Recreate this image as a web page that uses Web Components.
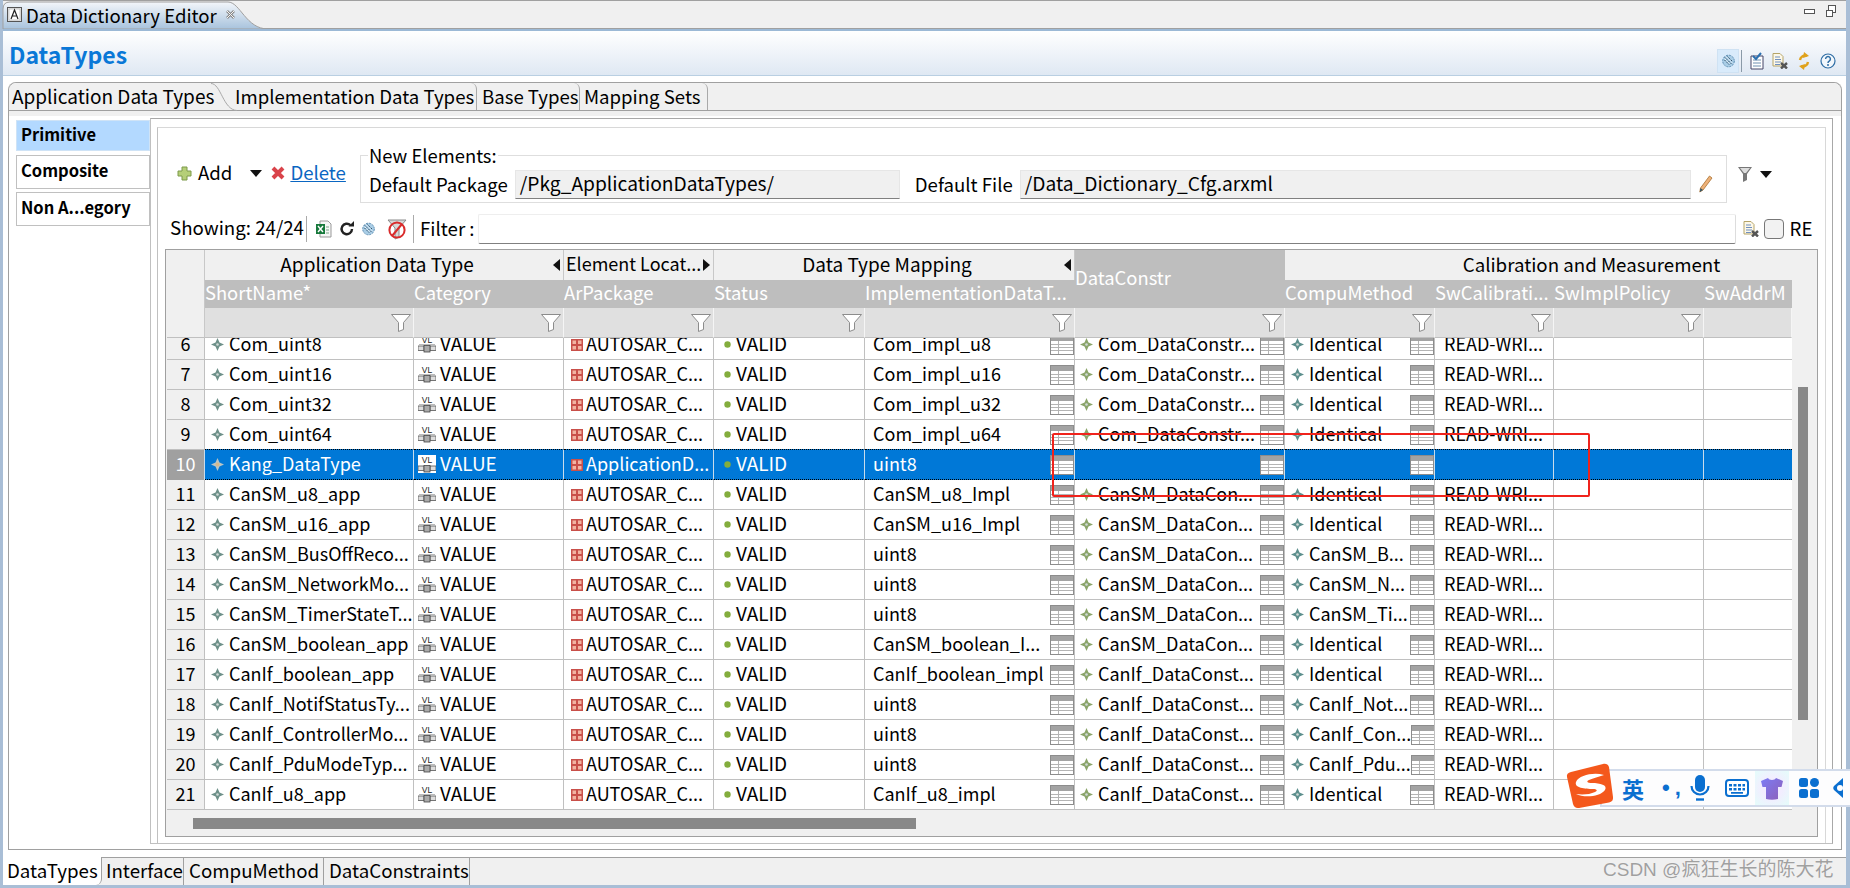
<!DOCTYPE html>
<html>
<head>
<meta charset="utf-8">
<title>Data Dictionary Editor</title>
<style>
    html, body { margin: 0; height: 100%; overflow: hidden; background: #fff; }
    body { font: 18px "Noto Sans CJK SC", "Noto Sans", sans-serif; color: #000; }
</style>
</head>
<body>
<dd-app></dd-app>

<script>
const ICONS = {
    tabA: `<svg width="15" height="15" viewBox="0 0 15 15"><rect x=".5" y=".5" width="14" height="14" fill="#e8e8e8" stroke="#555"/><rect x="2" y="2" width="11" height="11" fill="#fff" stroke="#aaa" stroke-width=".6"/><path d="M4 12 7.5 3 11 12M5.4 9h4.2" fill="none" stroke="#222" stroke-width="1.2"/></svg>`,
    close: `<svg width="11" height="11" viewBox="0 0 11 11"><path d="M2 2l7 7M9 2l-7 7" stroke="#8a8a8a" stroke-width="2.6"/><path d="M2 2l7 7M9 2l-7 7" stroke="#f4f4f4" stroke-width="1"/></svg>`,
    minimize: `<svg width="11" height="5" viewBox="0 0 11 5"><rect x=".5" y=".5" width="10" height="4" fill="#fff" stroke="#555"/></svg>`,
    restore: `<svg width="10" height="12" viewBox="0 0 10 12"><rect x="2.5" y=".5" width="7" height="7" fill="#fff" stroke="#555"/><rect x=".5" y="5.5" width="6" height="6" fill="#fff" stroke="#555"/></svg>`,
    plus: `<svg width="15" height="15" viewBox="0 0 15 15"><path d="M5 1h5v4h4v5h-4v4H5v-4H1V5h4z" fill="#b5cf78" stroke="#7d9a4a"/></svg>`,
    redx: `<svg width="14" height="14" viewBox="0 0 14 14"><path d="M2 2l10 10M12 2L2 12" stroke="#d9434a" stroke-width="4"/></svg>`,
    caret: `<svg width="12" height="7" viewBox="0 0 12 7"><path d="M0 0h12L6 7z" fill="#111"/></svg>`,
    excel: `<svg width="17" height="18" viewBox="0 0 17 18"><path d="M5 1h8l3 3v13H5z" fill="#f6f6f6" stroke="#999"/><rect x="1" y="4" width="9" height="10" fill="#17793c"/><path d="M3 6l5 6M8 6l-5 6" stroke="#fff" stroke-width="1.4"/><path d="M11 7h3M11 10h3M11 13h3" stroke="#7aa888"/></svg>`,
    refresh: `<svg width="16" height="16" viewBox="0 0 16 16"><path d="M13 8a5.2 5.2 0 1 1-1.6-3.8" fill="none" stroke="#222" stroke-width="2.4"/><path d="M9.5 5.5H15V0z" fill="#222"/></svg>`,
    gear: `<svg width="13" height="14" viewBox="0 0 13 14"><circle cx="6.5" cy="7" r="5.8" fill="#a9cde6" stroke="#5b8db2" stroke-dasharray="2 1"/><path d="M3 3.500l7 7M5.500 2.500l5 5M2.500 6l5 5" stroke="#2f4f66" stroke-width="1" stroke-dasharray="1.500 1"/><path d="M4.200 2.800l6 6M2.800 4.800l5 5" stroke="#fff" stroke-width=".9" stroke-dasharray="1.500 1"/></svg>`,
    nofilter: `<svg width="20" height="22" viewBox="0 0 20 22"><path d="M1 2h18l-7 8v9l-4 2V10z" fill="#d8d8d8" stroke="#8a8a8a"/><circle cx="10" cy="12" r="7.6" fill="none" stroke="#d92b2b" stroke-width="2"/><path d="M5 18 15 6" stroke="#d92b2b" stroke-width="2"/></svg>`,
    funnel: `<svg width="14" height="15" viewBox="0 0 14 15"><path d="M0 0h14L9 7v6l-4 2V7z" fill="#777"/><path d="M2 1h10L8 6H6z" fill="#ddd"/></svg>`,
    pencil: `<svg width="14" height="18" viewBox="0 0 14 18"><path d="M10.5 1 13 3 4 15 .8 17 1.5 13z" fill="#eeb27a" stroke="#a9702f" stroke-width=".8"/><path d="M.8 17 1.5 13 4 15z" fill="#356"/></svg>`,
    doccheck: `<svg width="14" height="18" viewBox="0 0 14 18"><path d="M1 4h12v13H1z" fill="#fff" stroke="#446"/><path d="M3 8h8M3 11h8M3 14h8" stroke="#6f8fb0"/><path d="M3 4l3 3 5-6" fill="none" stroke="#2a6fb0" stroke-width="2"/></svg>`,
    docx: `<svg width="16" height="16" viewBox="0 0 16 16"><path d="M1 .5h7l3 3V13H1z" fill="#fdf8e8" stroke="#b5a468"/><path d="M3 4h5M3 6.5h6M3 9h6M3 11.5h5" stroke="#6f8fc0"/><path d="M9 10l6 5.5M15 10l-6 5.5" stroke="#555" stroke-width="2.4"/></svg>`,
    sync: `<svg width="16" height="18" viewBox="0 0 16 18"><path d="M4 8a5 5 0 0 1 7-4" fill="none" stroke="#e0a21c" stroke-width="2.4"/><path d="M8 0l5 4-6 2z" fill="#e0a21c"/><path d="M12 10a5 5 0 0 1-7 4" fill="none" stroke="#e0a21c" stroke-width="2.4"/><path d="M8 18l-5-4 6-2z" fill="#e0a21c"/></svg>`,
    help: `<svg width="16" height="16" viewBox="0 0 16 16"><circle cx="8" cy="8" r="7" fill="#f2f7fc" stroke="#2f6ea5" stroke-width="1.2"/><path d="M5.6 6a2.4 2.4 0 1 1 3.6 2.1C8.4 8.600 8 9 8 10" fill="none" stroke="#2f6ea5" stroke-width="1.5"/><circle cx="8" cy="12" r="1" fill="#2f6ea5"/></svg>`,
    headFunnel: `<svg width="20" height="18" viewBox="0 0 20 18"><path d="M.5.5h19l-7 8v7l-5 2v-9z" fill="#fff" stroke="#8c8c8c"/></svg>`,
    triLeft: `<svg width="7" height="12" viewBox="0 0 7 12"><path d="M7 0v12L0 6z" fill="#111"/></svg>`,
    triRight: `<svg width="7" height="12" viewBox="0 0 7 12"><path d="M0 0v12l7-6z" fill="#111"/></svg>`,
    star: `<svg width="13" height="13" viewBox="0 0 13 13"><path d="M6.500 0l2 4.500 4.500 2-4.500 2-2 4.500-2-4.500-4.500-2 4.500-2z" fill="currentColor"/><circle cx="6.500" cy="6.500" r="1.300" fill="#cfdad6"/></svg>`,
    starSel: `<svg width="13" height="13" viewBox="0 0 13 13"><path d="M6.500 0l2 4.500 4.500 2-4.500 2-2 4.500-2-4.500-4.500-2 4.500-2z" fill="#b9c4c4"/><circle cx="6.500" cy="6.500" r="2" fill="#d7b98a"/></svg>`,
    value: `<svg width="18" height="20" viewBox="0 0 18 20"><text x="9" y="8" font-size="8.500" text-anchor="middle" font-family="Liberation Sans" fill="#222">VL</text><path d="M1 9.500h16" stroke="#bbb"/><rect x="0" y="11" width="6" height="4.500" fill="#ddd" stroke="#555" stroke-width=".8"/><rect x="12" y="11" width="6" height="4.500" fill="#ddd" stroke="#555" stroke-width=".8"/><rect x="6" y="10.500" width="6" height="6.500" fill="#aaa" stroke="#444" stroke-width=".8"/></svg>`,
    valueSel: `<svg width="18" height="20" viewBox="0 0 18 20"><rect width="18" height="18" fill="#fff"/><text x="9" y="8" font-size="8.500" text-anchor="middle" font-family="Liberation Sans" fill="#222">VL</text><rect x="0" y="11" width="6" height="4.500" fill="#ddd" stroke="#555" stroke-width=".8"/><rect x="12" y="11" width="6" height="4.500" fill="#ddd" stroke="#555" stroke-width=".8"/><rect x="6" y="10.500" width="6" height="6.500" fill="#aaa" stroke="#444" stroke-width=".8"/></svg>`,
    pkg: `<svg width="12" height="12" viewBox="0 0 12 12"><rect width="12" height="12" fill="#c9504a"/><path d="M1.500 1.500h3.500V5H1.500zM7 1.500h3.500V5H7zM1.500 7h3.500v3.500H1.500zM7 7h3.500v3.500H7z" fill="#f2b3a2"/></svg>`,
    dot: `<svg width="7" height="7" viewBox="0 0 7 7"><circle cx="3.500" cy="3.500" r="3.200" fill="#83ad3d"/></svg>`,
    table: `<svg width="24" height="20" viewBox="0 0 24 20"><rect x=".5" y=".5" width="23" height="19" fill="#fff" stroke="#8c8c8c"/><rect x="1" y="1" width="22" height="5" fill="#a3a3a3"/><path d="M1 9.500h22M1 12.500h22M1 15.500h22M8.500 6v13" stroke="#b4b4b4"/></svg>`,
    sogou: `<svg width="48" height="46" viewBox="0 0 48 46"><path d="M5 9 37 1c3-.7 5 .5 6 3l4 30c.4 3-1 5-4 5.500L13 45c-3 .5-5-1-6-4L1 14c-.6-2.500 1-4.300 4-5z" fill="#f4581c"/><path d="M38 12C28 9 13 12 10 19c-2 6 9 7 17 7 4 .2 5 1.500 2 3-5 2.500-13 3-19 2 8 4 24 3 29-4 3-5-5-7-13-7-5 0-6-1.500-3-3 4-2 10-3 15-5z" fill="#fff"/></svg>`,
    mic: `<svg width="20" height="26" viewBox="0 0 20 26"><rect x="5" y="0" width="10" height="17" rx="5" fill="#0a6fd0"/><path d="M1.500 11a8.500 8.500 0 0 0 17 0" fill="none" stroke="#0a6fd0" stroke-width="2.200"/><path d="M6 24.500h8" stroke="#0a6fd0" stroke-width="2.400"/></svg>`,
    keyboard: `<svg width="24" height="18" viewBox="0 0 24 18"><rect x="1" y="1" width="22" height="16" rx="3" fill="#fff" stroke="#0a6fd0" stroke-width="2"/><path d="M4 5h3v2.500H4zM8.500 5h3v2.500h-3zM13 5h3v2.500h-3zM17.500 5H20v2.500h-2.500zM4 9h3v2.500H4zM8.500 9h3v2.500h-3zM13 9h3v2.500h-3zM17.500 9H20v2.500h-2.500zM6 13h12v1.800H6z" fill="#0a6fd0"/></svg>`,
    shirt: `<svg width="24" height="22" viewBox="0 0 24 22"><defs><linearGradient id="sg" x1="0" y1="0" x2="1" y2="1"><stop offset="0" stop-color="#7c7bf5"/><stop offset="1" stop-color="#8d60b8"/></linearGradient></defs><path d="M1 3 8 0c1 2.500 7 2.500 8 0l7 3-1.500 6H18v12c-4 1-8 1-12 0V9H2.500z" fill="url(#sg)"/></svg>`,
    apps: `<svg width="20" height="20" viewBox="0 0 20 20"><rect x="0" y="0" width="9" height="9" rx="2.500" fill="#0a6fd0"/><circle cx="15.500" cy="4.500" r="4.500" fill="#0a6fd0"/><rect x="0" y="11" width="9" height="9" rx="2.500" fill="#0a6fd0"/><rect x="11" y="11" width="9" height="9" rx="2.500" fill="#0a6fd0"/></svg>`,
    skin: `<svg width="10" height="20" viewBox="0 0 10 20"><path d="M10 0 1 8c-1 1-1 3 0 4l9 8z" fill="#0a6fd0"/><circle cx="7" cy="10" r="3" fill="#fff"/></svg>`,
}

class DdIcon extends HTMLElement {
    constructor() {
        super()
        this.attachShadow({ mode: 'open' })
    }
    connectedCallback() {
        const tint = this.getAttribute('tint')
        this.shadowRoot.innerHTML = `
            <style>:host { display: inline-flex; flex: none; ${tint ? 'color:' + tint + ';' : ''} } svg { display: block; }</style>
            ${ICONS[this.getAttribute('name')] || ''}`
    }
}

// ---- top of the editor
var templateEditorTabs = document.createElement('template')
templateEditorTabs.innerHTML = `
<style>
    :host { display: flex; height: 29px; background: #f0f0f0; border-top: 1px solid #a0a0a0; border-bottom: 1px solid #a0a0a0; box-sizing: border-box; }
    #tab { position: relative; width: 265px; display: flex; align-items: center; gap: 4px; padding-left: 4px; box-sizing: border-box; font-size: 18.600px; }
    #tab svg.shape { position: absolute; left: -3px; top: 0; z-index: 0; }
    #tab > dd-icon, #tab > span { position: relative; z-index: 1; }
    #close { margin-left: 4px; }
    #buttons { margin-left: auto; display: flex; gap: 11px; align-items: center; height: 20px; padding-right: 10px; }
</style>
<div id="tab">
    <svg class="shape" width="268" height="28" viewBox="0 0 268 28">
        <defs><linearGradient id="g" x1="0" y1="0" x2="0" y2="1"><stop offset="0" stop-color="#f3f6fa"/><stop offset="1" stop-color="#a8c3dd"/></linearGradient></defs>
        <path d="M3 28V8Q3 1 10 1H228C240 1 246 28 268 28Z" fill="url(#g)" stroke="#a0a0a0"/>
    </svg>
    <dd-icon name="tabA"></dd-icon>
    <span>Data Dictionary Editor</span>
    <dd-icon id="close" name="close"></dd-icon>
</div>
<div id="buttons"><dd-icon name="minimize"></dd-icon><dd-icon name="restore"></dd-icon></div>
`
class DdEditorTabs extends HTMLElement {
    constructor() {
        super()
        this.attachShadow({ mode: 'open' }).appendChild(templateEditorTabs.content.cloneNode(true))
    }
}

var templateFormHeader = document.createElement('template')
templateFormHeader.innerHTML = `
<style>
    :host { display: flex; align-items: flex-start; height: 47px; box-sizing: border-box; padding: 6px 10px 0 6px; border-top: 2px solid #9cb9d6; border-bottom: 1px solid #b9cfe2; background: linear-gradient(#fff, #dfe8f3); }
    h1 { margin: 0; font-size: 23px; line-height: 34px; font-weight: 700; color: #0a78d7; }
    #tools { margin-left: auto; display: flex; align-items: center; gap: 8px; height: 24px; margin-top: 12px; }
    #sel { width: 22px; height: 24px; display: flex; align-items: center; justify-content: center; background: #d9ebfb; border: 1px solid #cfe2f3; box-sizing: border-box; }
    #sep { width: 1px; height: 22px; background: #8a9aa8; margin-left: -6px; }
</style>
<h1>DataTypes</h1>
<div id="tools">
    <div id="sel"><dd-icon name="gear"></dd-icon></div>
    <div id="sep"></div>
    <dd-icon name="doccheck"></dd-icon>
    <dd-icon name="docx"></dd-icon>
    <dd-icon name="sync"></dd-icon>
    <dd-icon name="help"></dd-icon>
</div>
`
class DdFormHeader extends HTMLElement {
    constructor() {
        super()
        this.attachShadow({ mode: 'open' }).appendChild(templateFormHeader.content.cloneNode(true))
    }
}

// ---- inner and bottom tab strips
var templateInnerTabs = document.createElement('template')
templateInnerTabs.innerHTML = `
<style>
    :host { display: flex; height: 28px; box-sizing: border-box; border-bottom: 1px solid #a0a0a0; background: #f0f0f0; border-radius: 8px 8px 0 0; }
    .t { display: flex; align-items: center; font-size: 18.600px; padding: 0 0 3px 4px; border-right: 1px solid #a9a9a9; border-radius: 0 6px 0 0; box-sizing: border-box; white-space: nowrap; }
    #active { position: relative; width: 226px; padding: 0 0 4px 3px; border: 0; margin-bottom: -1px; font-size: 19px; }
    #active svg { position: absolute; right: -2px; top: 0; }
</style>
<div class="t" id="active">Application Data Types
    <svg width="26" height="28" viewBox="0 0 26 28"><path d="M0 .5C10 .5 12 27 26 27.500" fill="none" stroke="#a9a9a9"/></svg>
</div>
<div class="t" style="width:242px;padding-left:0">Implementation Data Types</div>
<div class="t" style="width:103px;padding-left:5px">Base Types</div>
<div class="t" style="width:128px;padding-left:4px">Mapping Sets</div>
`
class DdInnerTabs extends HTMLElement {
    constructor() {
        super()
        this.attachShadow({ mode: 'open' }).appendChild(templateInnerTabs.content.cloneNode(true))
    }
}

var templateBottomTabs = document.createElement('template')
templateBottomTabs.innerHTML = `
<style>
    :host { display: flex; height: 28px; margin-top: 7px; background: #f0f0f0; border-top: 1px solid #a0a0a0; box-sizing: border-box; font-size: 18.700px; }
    div { display: flex; align-items: center; padding: 0 0 4px 5px; border-right: 1px solid #a0a0a0; box-sizing: border-box; white-space: nowrap; }
    #active { width: 99px; background: #fff; margin-top: -1px; border-right: 1px solid #a0a0a0; border-radius: 0 0 6px 0; padding-left: 4px; }
</style>
<div id="active">DataTypes</div>
<div style="width:82px;padding-left:4px">Interface</div>
<div style="width:140px">CompuMethod</div>
<div style="width:146px">DataConstraints</div>
`
class DdBottomTabs extends HTMLElement {
    constructor() {
        super()
        this.attachShadow({ mode: 'open' }).appendChild(templateBottomTabs.content.cloneNode(true))
    }
}

var templateSideList = document.createElement('template')
templateSideList.innerHTML = `
<style>
    :host { display: flex; flex-direction: column; width: 134px; flex: none; gap: 3px; padding: 2px 0 0 7px; font-size: 16.500px; font-weight: 700; }
    div { display: flex; align-items: center; box-sizing: border-box; height: 34px; padding: 0 0 4px 4px; border: 1px solid #c0c0c0; }
    #first { height: 31px; background: #b3d9ff; border-color: #cfe3f6; margin-bottom: 1px; padding-bottom: 3px; }
</style>
<div id="first">Primitive</div>
<div>Composite</div>
<div>Non A...egory</div>
`
class DdSideList extends HTMLElement {
    constructor() {
        super()
        this.attachShadow({ mode: 'open' }).appendChild(templateSideList.content.cloneNode(true))
    }
}

// ---- toolbar rows above the table
var templateElementsBar = document.createElement('template')
templateElementsBar.innerHTML = `
<style>
    :host { display: flex; align-items: flex-start; height: 76px; font-size: 18.600px; box-sizing: border-box; padding: 17px 0 0 19px; }
    #add { display: flex; align-items: center; width: 183px; height: 24px; margin-top: 16px; }
    #add dd-icon:nth-child(1) { margin-right: 6px; }
    #add span, #add a { margin-bottom: 3px; }
    #caret { margin: 0 9px 0 18px; }
    a { color: #0a66c2; text-decoration: underline; margin-left: 5px; }
    fieldset { margin: 0; padding: 0 8px; width: 1367px; height: 58px; box-sizing: border-box; border: 1px solid #dedede; min-inline-size: 0; }
    legend { padding: 0 1px; font-size: 18.400px; line-height: 20px; height: 20px; margin-left: -1px; }
    #fields { display: flex; align-items: center; height: 30px; margin-top: 4px; }
    .val { height: 29px; box-sizing: border-box; display: flex; align-items: center; background: #f0f0f0; border: 1px solid #e6e6e6; border-bottom: 1px solid #808080; padding: 0 0 2px 4px; font-size: 19.200px; }
    #fields > span { margin-bottom: 2px; }
    #pkg { width: 385px; margin: 0 15px 0 7px; }
    #file { width: 671px; margin-left: 7px; }
    #pencil { margin-left: 8px; }
    #flt { display: flex; align-items: center; gap: 8px; margin: 22px 0 0 11px; }
</style>
<div id="add">
    <dd-icon name="plus"></dd-icon><span>Add</span>
    <dd-icon id="caret" name="caret"></dd-icon>
    <dd-icon name="redx"></dd-icon><a>Delete</a>
</div>
<fieldset>
    <legend>New Elements:</legend>
    <div id="fields">
        <span>Default Package</span><div class="val" id="pkg">/Pkg_ApplicationDataTypes/</div>
        <span>Default File</span><div class="val" id="file">/Data_Dictionary_Cfg.arxml</div>
        <dd-icon id="pencil" name="pencil"></dd-icon>
    </div>
</fieldset>
<div id="flt"><dd-icon name="funnel"></dd-icon><dd-icon name="caret"></dd-icon></div>
`
class DdElementsBar extends HTMLElement {
    constructor() {
        super()
        this.attachShadow({ mode: 'open' }).appendChild(templateElementsBar.content.cloneNode(true))
    }
}

var templateFilterBar = document.createElement('template')
templateFilterBar.innerHTML = `
<style>
    :host { display: flex; align-items: center; height: 30px; margin-top: 10px; font-size: 18.700px; padding-left: 12px; }
    #showing { width: 137px; overflow: hidden; white-space: nowrap; height: 26px; line-height: 22px; border-right: 1px solid #aaa; margin-right: 8px; flex: none; box-sizing: border-box; }
    span { margin-bottom: 3px; }
    #excel { margin-right: 7px; }
    #refresh { margin-right: 7px; }
    #gear { margin-right: 12px; }
    #sep { width: 1px; height: 28px; background: #aaa; margin: 0 6px 0 6px; }
    input { width: 1258px; height: 30px; box-sizing: border-box; border: 1px solid #eee; border-bottom-color: #808080; border-right-color: #ddd; border-radius: 2px; margin: 0 7px 0 3px; flex: none; background: #fff; }
    #chk { width: 20px; height: 20px; box-sizing: border-box; border: 1px solid #777; border-radius: 4px; background: #f2f2f2; margin: 0 6px 0 0; }
</style>
<div id="showing">Showing: 24/24</div>
<dd-icon id="excel" name="excel"></dd-icon>
<dd-icon id="refresh" name="refresh"></dd-icon>
<dd-icon id="gear" name="gear"></dd-icon>
<dd-icon name="nofilter"></dd-icon>
<div id="sep"></div>
<span>Filter :</span>
<input type="text">
<dd-icon name="docx" style="margin:0 5px 0 0"></dd-icon>
<div id="chk"></div>
<span>RE</span>
`
class DdFilterBar extends HTMLElement {
    constructor() {
        super()
        this.attachShadow({ mode: 'open' }).appendChild(templateFilterBar.content.cloneNode(true))
    }
}

// ---- the table
const COLS = '38px 209px 150px 150px 151px 210px 210px 150px 119px 150px 88px'
const A = 'AUTOSAR_C...'
const ROWS = [
    [6, 'Com_uint8', A, 'Com_impl_u8', 'Com_DataConstr...', 'Identical'],
    [7, 'Com_uint16', A, 'Com_impl_u16', 'Com_DataConstr...', 'Identical'],
    [8, 'Com_uint32', A, 'Com_impl_u32', 'Com_DataConstr...', 'Identical'],
    [9, 'Com_uint64', A, 'Com_impl_u64', 'Com_DataConstr...', 'Identical'],
    [10, 'Kang_DataType', 'ApplicationD...', 'uint8', '', ''],
    [11, 'CanSM_u8_app', A, 'CanSM_u8_Impl', 'CanSM_DataCon...', 'Identical'],
    [12, 'CanSM_u16_app', A, 'CanSM_u16_Impl', 'CanSM_DataCon...', 'Identical'],
    [13, 'CanSM_BusOffReco...', A, 'uint8', 'CanSM_DataCon...', 'CanSM_B...'],
    [14, 'CanSM_NetworkMo...', A, 'uint8', 'CanSM_DataCon...', 'CanSM_N...'],
    [15, 'CanSM_TimerStateT...', A, 'uint8', 'CanSM_DataCon...', 'CanSM_Ti...'],
    [16, 'CanSM_boolean_app', A, 'CanSM_boolean_I...', 'CanSM_DataCon...', 'Identical'],
    [17, 'CanIf_boolean_app', A, 'CanIf_boolean_impl', 'CanIf_DataConst...', 'Identical'],
    [18, 'CanIf_NotifStatusTy...', A, 'uint8', 'CanIf_DataConst...', 'CanIf_Not...'],
    [19, 'CanIf_ControllerMo...', A, 'uint8', 'CanIf_DataConst...', 'CanIf_Con...'],
    [20, 'CanIf_PduModeTyp...', A, 'uint8', 'CanIf_DataConst...', 'CanIf_Pdu...'],
    [21, 'CanIf_u8_app', A, 'CanIf_u8_impl', 'CanIf_DataConst...', 'Identical'],
]

var templateGrid = document.createElement('template')
templateGrid.innerHTML = `
<style>
    :host { display: flex; height: 588px; box-sizing: border-box; margin: 5px 7px 0 7px; border: 1px solid #a0a0a0; background: #f0f0f0; font-size: 18px; }
    #main { width: 1625px; margin-left: 1px; flex: none; }
    #head { display: grid; grid-template-columns: ${COLS}; grid-template-rows: 30px 28px 30px; }
    #head > div { display: flex; align-items: center; white-space: nowrap; overflow: hidden; box-sizing: border-box; }
    .corner { grid-column: 1; grid-row: 1 / 4; background: #f0f0f0; border-right: 1px solid #c8c8c8; border-bottom: 1px solid #c0c0c0; }
    .grp { grid-row: 1; background: #f0f0f0; justify-content: center; position: relative; border-right: 1px solid #c8c8c8; padding: 0 14px 4px 0; font-size: 19px; }
    .grp dd-icon { position: absolute; right: 3px; top: 9px; }
    .name { grid-row: 2; background: #bebebe; color: #fff; padding-bottom: 4px; font-size: 18.400px; }
    .flt { grid-row: 3; background: #e0e0e0; border-right: 1px solid #f5f5f5; border-bottom: 1px solid #c0c0c0; justify-content: flex-end; padding-right: 2px; }
    #dc { grid-column: 7; grid-row: 1 / 3; background: #bebebe; color: #fff; padding-bottom: 4px; font-size: 18.400px; }
    #body { height: 472px; overflow: hidden; background: #fff; }
    #rows { margin-top: -8px; }
    .row { display: grid; grid-template-columns: ${COLS}; height: 30px; }
    .c { display: flex; align-items: center; box-sizing: border-box; height: 30px; border-right: 1px solid #c0c0c0; border-bottom: 1px solid #c0c0c0; white-space: nowrap; overflow: hidden; background: #fff; }
    .c span { margin-bottom: 4px; }
    .c .big { font-size: 19px; }
    .c.no { background: #f0f0f0; justify-content: center; }
    .c .t { margin-left: auto; }
    .sel .c { background: #0078d7; color: #fff; border-right-color: #c8dcec; border-top: 1px dotted #000; border-bottom: 1px dotted #000; height: 31px; margin-top: -1px; }
    .sel .c.no { background: #a0a0a0; border-top: 0; border-bottom: 0; height: 30px; margin-top: 0; }
    #hbar { height: 27px; display: flex; align-items: center; }
    #hbar div { width: 723px; height: 11px; background: #888; margin-left: 26px; }
    #side { flex: 1; position: relative; }
    #vthumb { width: 10px; height: 333px; background: #888; margin: 137px 0 0 6px; }
</style>
<div id="main">
    <div id="head"></div>
    <div id="body"><div id="rows"></div></div>
    <div id="hbar"><div></div></div>
</div>
<div id="side"><div id="vthumb"></div></div>
`
class DdGrid extends HTMLElement {
    constructor() {
        super()
        this.attachShadow({ mode: 'open' }).appendChild(templateGrid.content.cloneNode(true))
    }

    connectedCallback() {
        const names = ['ShortName*', 'Category', 'ArPackage', 'Status', 'ImplementationDataT...', null, 'CompuMethod', 'SwCalibrati...', 'SwImplPolicy', 'SwAddrM']
        let head = `
            <div class="corner"></div>
            <div class="grp" style="grid-column:2 / 4">Application Data Type<dd-icon name="triLeft"></dd-icon></div>
            <div class="grp" style="grid-column:4;justify-content:flex-start;padding-left:2px;font-size:18px">Element Locat...<dd-icon name="triRight"></dd-icon></div>
            <div class="grp" style="grid-column:5 / 7">Data Type Mapping<dd-icon name="triLeft"></dd-icon></div>
            <div id="dc">DataConstr</div>
            <div class="grp" style="grid-column:8 / 12;border-right:0;padding:0 0 4px 106px;font-size:18.700px">Calibration and Measurement</div>`
        names.forEach((n, i) => { if (n) head += `<div class="name" style="grid-column:${i + 2}">${n}</div>` })
        names.forEach((n, i) => { head += `<div class="flt" style="grid-column:${i + 2}">${i < 9 ? '<dd-icon name="headFunnel"></dd-icon>' : ''}</div>` })
        this.shadowRoot.getElementById('head').innerHTML = head

        this.shadowRoot.getElementById('rows').innerHTML = ROWS.map(([no, name, pkg, impl, constr, compu]) => {
            const sel = no === 10
            return `<div class="row ${sel ? 'sel' : ''}">
                <div class="c no"><span>${no}</span></div>
                <div class="c" style="padding-left:6px"><dd-icon name="${sel ? 'starSel' : 'star'}" tint="#6e9089"></dd-icon><span style="margin-left:5px">${name}</span></div>
                <div class="c" style="padding-left:4px"><dd-icon name="${sel ? 'valueSel' : 'value'}"></dd-icon><span class="big" style="margin-left:4px">VALUE</span></div>
                <div class="c" style="padding-left:7px"><dd-icon name="pkg"></dd-icon><span style="margin-left:3px">${pkg}</span></div>
                <div class="c" style="padding-left:10px"><dd-icon name="dot"></dd-icon><span class="big" style="margin-left:5px">VALID</span></div>
                <div class="c" style="padding-left:8px"><span>${impl}</span><dd-icon class="t" name="table"></dd-icon></div>
                <div class="c" style="padding-left:5px">${constr ? `<dd-icon name="star" tint="#8ba56a"></dd-icon><span style="margin-left:5px">${constr}</span>` : ''}<dd-icon class="t" name="table"></dd-icon></div>
                <div class="c" style="padding-left:6px">${compu ? `<dd-icon name="star" tint="#5d8f8d"></dd-icon><span style="margin-left:5px">${compu}</span>` : ''}<dd-icon class="t" name="table"></dd-icon></div>
                <div class="c" style="padding-left:9px"><span>${sel ? '' : 'READ-WRI...'}</span></div>
                <div class="c"></div>
                <div class="c" style="border-right:0"></div>
            </div>`
        }).join('')
    }
}

// ---- things lying over the page
var templateImeBar = document.createElement('template')
templateImeBar.innerHTML = `
<style>
    :host { position: absolute; left: 1566px; top: 763px; width: 284px; height: 46px; display: block; }
    #bar { position: absolute; left: 34px; top: 6px; right: 0; height: 38px; box-sizing: border-box; background: #fdfdfe; border: 2px solid #d3dceb; border-right: 0; display: flex; align-items: center; overflow: hidden; color: #0a6fd0; }
    #logo { position: absolute; left: 0; top: 0; }
    #en { font: 700 22px "Noto Sans CJK SC", sans-serif; margin-left: 20px; width: 36px; }
    #punct { width: 67px; margin-left: 18px; font: 700 22px "Liberation Sans", sans-serif; letter-spacing: 5px; }
    #bar dd-icon { margin-right: 15px; }
    #sh { background: radial-gradient(circle, #f2edff 40%, #e6fbfb 90%); padding: 8px 5px 6px; margin: 0 10px 0 -9px !important; }
</style>
<div id="bar">
    <span id="en">英</span>
    <span id="punct">&bull;,</span>
    <dd-icon name="mic" style="margin-left:4px"></dd-icon>
    <dd-icon name="keyboard"></dd-icon>
    <dd-icon id="sh" name="shirt"></dd-icon>
    <dd-icon name="apps" style="margin-right:14px"></dd-icon>
    <dd-icon name="skin"></dd-icon>
</div>
<dd-icon id="logo" name="sogou"></dd-icon>
`
class DdImeBar extends HTMLElement {
    constructor() {
        super()
        this.attachShadow({ mode: 'open' }).appendChild(templateImeBar.content.cloneNode(true))
    }
}

var templateApp = document.createElement('template')
templateApp.innerHTML = `
<style>
    :host { display: block; position: relative; width: 1850px; height: 888px; overflow: hidden; background: #fff; box-sizing: border-box; }
    #frame { height: 885px; box-sizing: border-box; border-left: 3px solid #a9bed6; border-right: 4px solid #a9bed6; display: flex; flex-direction: column; }
    #bottomline { height: 3px; background: #a9bed6; }
    #form { height: 768px; flex: none; margin: 6px 4px 0 5px; border: 1px solid #a0a0a0; border-top: 0; border-radius: 8px 8px 0 0; box-sizing: border-box; box-shadow: inset 0 1px 0 #a0a0a0; padding-top: 1px; display: flex; flex-direction: column; }
    #content { display: flex; flex: 1; padding-top: 7px; background: linear-gradient(#f0f0f0 5px, #fff 5px); }
    #p1 { flex: 1; height: 726px; box-sizing: border-box; border: 1px solid #a8a8a8; border-left-color: #c0c0c0; border-bottom-color: #c0c0c0; padding: 8px 6px 0 6px; background: #fff; margin-right: 8px; }
    #p2 { height: 716px; box-sizing: border-box; border: 1px solid #d8d8d8; border-left-color: #c0c0c0; border-bottom: 0; }
    #red { position: absolute; left: 1052px; top: 433px; width: 538px; height: 64px; box-sizing: border-box; border: 2px solid #f0231c; border-radius: 2px; }
    #mark { position: absolute; left: 1603px; top: 856px; font: 19px "Liberation Sans", "Noto Sans CJK SC", sans-serif; line-height: 28px; color: #a0a0a0; text-shadow: 0 0 1px #fff; white-space: nowrap; }
</style>
<div id="frame">
    <dd-editor-tabs></dd-editor-tabs>
    <dd-form-header></dd-form-header>
    <div id="form">
        <dd-inner-tabs></dd-inner-tabs>
        <div id="content">
            <dd-side-list></dd-side-list>
            <div id="p1"><div id="p2">
                <dd-elements-bar></dd-elements-bar>
                <dd-filter-bar></dd-filter-bar>
                <dd-grid></dd-grid>
            </div></div>
        </div>
    </div>
    <dd-bottom-tabs></dd-bottom-tabs>
</div>
<div id="bottomline"></div>
<div id="red"></div>
<dd-ime-bar></dd-ime-bar>
<div id="mark">CSDN @疯狂生长的陈大花</div>
`
class DdApp extends HTMLElement {
    constructor() {
        super()
        this.attachShadow({ mode: 'open' }).appendChild(templateApp.content.cloneNode(true))
    }
}

window.customElements.define('dd-icon', DdIcon)
window.customElements.define('dd-editor-tabs', DdEditorTabs)
window.customElements.define('dd-form-header', DdFormHeader)
window.customElements.define('dd-inner-tabs', DdInnerTabs)
window.customElements.define('dd-bottom-tabs', DdBottomTabs)
window.customElements.define('dd-side-list', DdSideList)
window.customElements.define('dd-elements-bar', DdElementsBar)
window.customElements.define('dd-filter-bar', DdFilterBar)
window.customElements.define('dd-grid', DdGrid)
window.customElements.define('dd-ime-bar', DdImeBar)
window.customElements.define('dd-app', DdApp)
</script>
</body>
</html>
